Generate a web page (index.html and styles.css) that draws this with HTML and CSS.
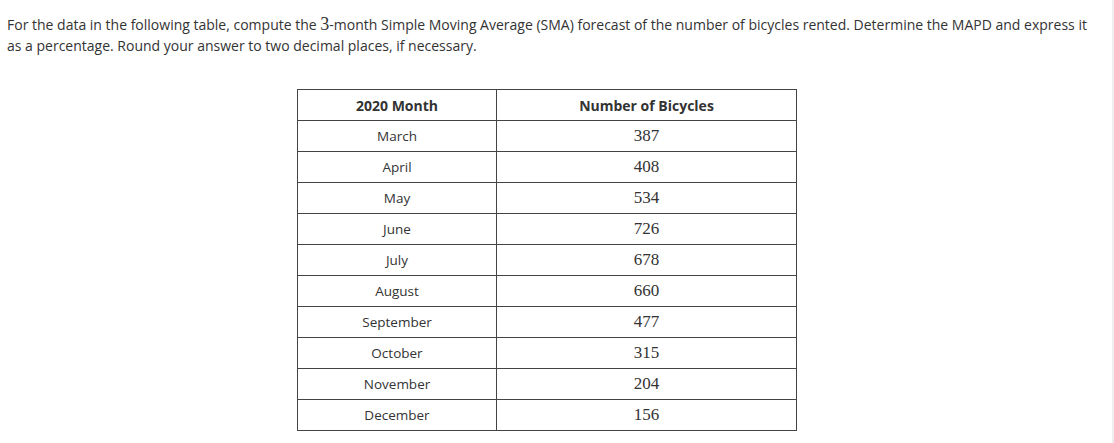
FILE: index.html
```html
<!DOCTYPE html>
<html>
<head>
<meta charset="utf-8">
<link rel="stylesheet" href="styles.css">
</head>
<body>
<div class="page">
  <p class="question">For the data in the following table, compute the <span class="num">3</span>-month Simple Moving Average (SMA) forecast of the number of bicycles rented. Determine the MAPD and express it as a percentage. Round your answer to two decimal places, if necessary.</p>
  <table class="data">
    <thead>
      <tr><th>2020 Month</th><th>Number of Bicycles</th></tr>
    </thead>
    <tbody>
      <tr><td>March</td><td class="n">387</td></tr>
      <tr><td>April</td><td class="n">408</td></tr>
      <tr><td>May</td><td class="n">534</td></tr>
      <tr><td>June</td><td class="n">726</td></tr>
      <tr><td>July</td><td class="n">678</td></tr>
      <tr><td>August</td><td class="n">660</td></tr>
      <tr><td>September</td><td class="n">477</td></tr>
      <tr><td>October</td><td class="n">315</td></tr>
      <tr><td>November</td><td class="n">204</td></tr>
      <tr><td>December</td><td class="n">156</td></tr>
    </tbody>
  </table>
</div>
<div class="edge"></div>
</body>
</html>
```
FILE: styles.css
```css
html, body {
  margin: 0;
  padding: 0;
  background: #fff;
}
body {
  display: flex;
  height: 443px;
  overflow: hidden;
}
.page {
  flex: 1;
  padding: 14px 20px 0 7px;
  font-family: "Open Sans", "Liberation Sans", sans-serif;
  color: #333;
}
.edge {
  width: 2px;
  background: #eeeeee;
}
.question {
  margin: 0;
  font-size: 14px;
  line-height: 21px;
}
.num {
  font-family: "Liberation Serif", serif;
  font-size: 18px;
  line-height: 14px;
}
.data {
  margin: 33px 0 0 290px;
  border-collapse: collapse;
  width: 500px;
  font-size: 13.5px;
  color: #333;
}
.data th, .data td {
  border: 1px solid #444;
  height: 30px;
  padding: 0;
  text-align: center;
  vertical-align: middle;
}
.data th {
  font-weight: 700;
  font-size: 14px;
}
.data th:first-child, .data td:first-child {
  width: 198px;
}
.data td.n {
  font-family: "Liberation Serif", serif;
  font-size: 17px;
}
```
